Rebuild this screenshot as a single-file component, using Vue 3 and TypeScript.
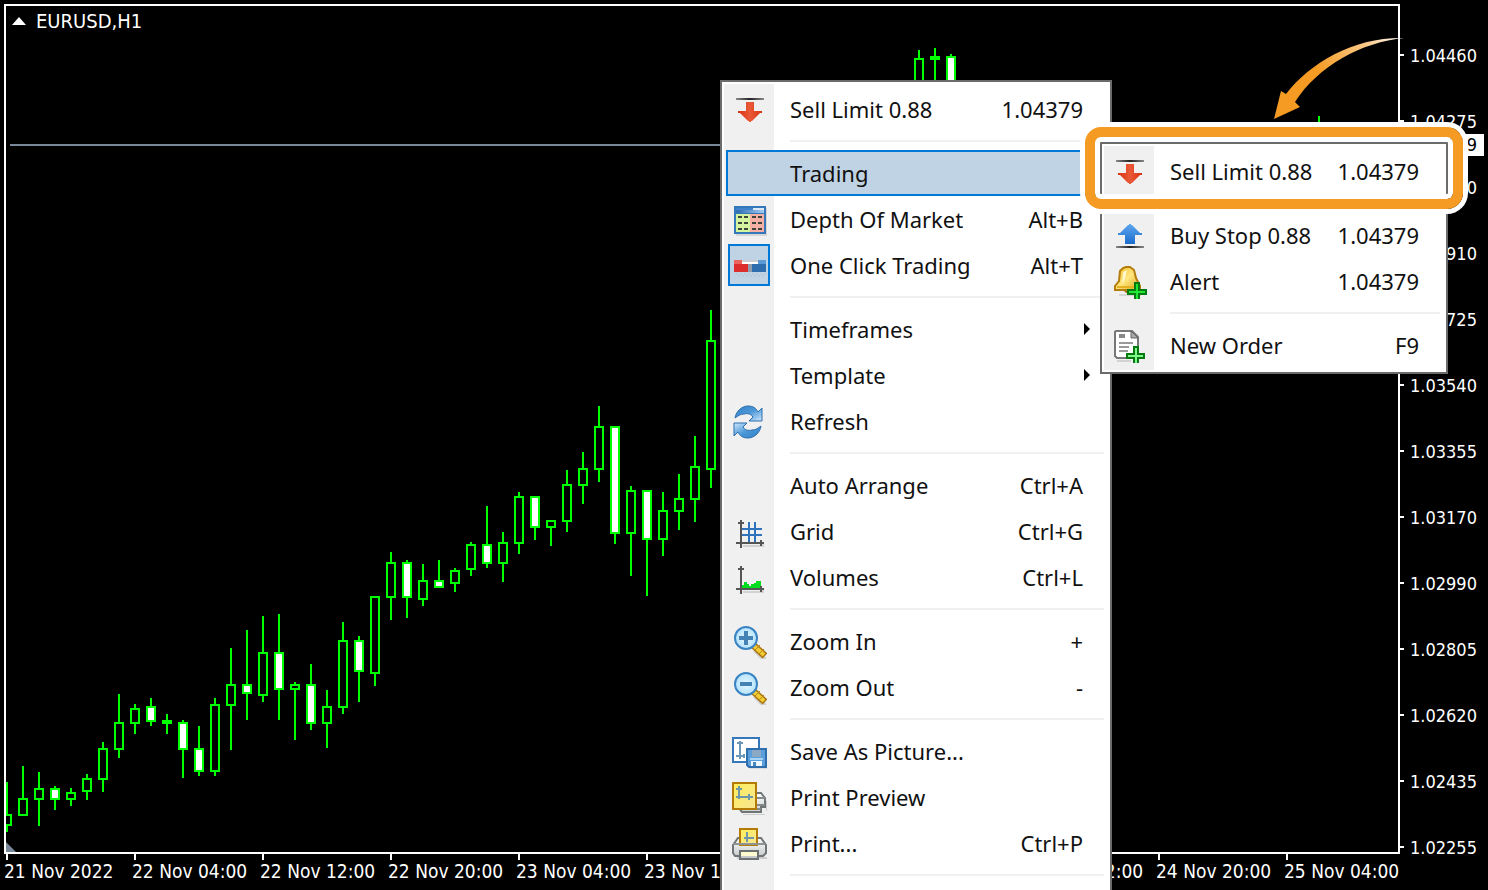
<script setup lang="ts">
interface Candle {
  slot: number
  high: number
  top: number
  bottom: number
  low: number
  bear: boolean
}

interface MenuEntry {
  id: string
  label?: string
  hint?: string
  icon?: string
  sub?: boolean
  active?: boolean
  checked?: boolean
}

const rows: [number, number, number, number, number, boolean][] = [
  [0, 782, 814, 826, 832, false],
  [1, 766, 798, 816, 816, false],
  [2, 772, 788, 800, 826, false],
  [3, 786, 788, 800, 810, true],
  [4, 788, 792, 800, 806, false],
  [5, 774, 778, 792, 800, false],
  [6, 742, 748, 780, 792, false],
  [7, 694, 722, 750, 758, false],
  [8, 704, 708, 724, 734, false],
  [9, 698, 706, 722, 726, true],
  [10, 714, 720, 724, 734, false],
  [11, 720, 722, 750, 778, true],
  [12, 726, 748, 772, 776, true],
  [13, 698, 704, 772, 776, false],
  [14, 648, 684, 706, 750, false],
  [15, 630, 684, 694, 720, true],
  [16, 616, 652, 696, 702, false],
  [17, 614, 652, 690, 720, true],
  [18, 682, 684, 690, 740, false],
  [19, 664, 684, 724, 730, true],
  [20, 690, 706, 724, 748, false],
  [21, 622, 640, 708, 714, false],
  [22, 636, 640, 672, 702, true],
  [23, 596, 596, 674, 686, false],
  [24, 552, 562, 598, 620, false],
  [25, 560, 562, 598, 618, true],
  [26, 564, 580, 600, 606, false],
  [27, 560, 580, 588, 588, true],
  [28, 568, 570, 584, 592, false],
  [29, 542, 544, 570, 576, false],
  [30, 506, 544, 564, 568, true],
  [31, 532, 542, 564, 582, false],
  [32, 492, 496, 544, 554, false],
  [33, 496, 496, 528, 540, true],
  [34, 520, 520, 528, 546, false],
  [35, 470, 484, 522, 532, false],
  [36, 452, 468, 486, 504, false],
  [37, 406, 426, 470, 482, false],
  [38, 426, 426, 534, 544, true],
  [39, 486, 490, 534, 576, false],
  [40, 490, 490, 540, 596, true],
  [41, 492, 510, 540, 556, false],
  [42, 474, 498, 512, 530, false],
  [43, 436, 466, 500, 522, false],
  [44, 310, 340, 470, 488, false],
  [57, 50, 58, 180, 200, false],
  [58, 48, 56, 60, 140, false],
  [59, 54, 56, 180, 200, true],
  [82, 116, 150, 190, 200, false],
]

const candles: Candle[] = rows.map(([slot, high, top, bottom, low, bear]) => ({
  slot, high, top, bottom, low, bear,
}))

const prices = [
  '1.04460', '1.04275', '1.04090', '1.03910', '1.03725', '1.03540', '1.03355',
  '1.03170', '1.02990', '1.02805', '1.02620', '1.02435', '1.02255',
]

const times = [
  '21 Nov 2022', '22 Nov 04:00', '22 Nov 12:00', '22 Nov 20:00', '23 Nov 04:00', '23 Nov 12:00',
  '23 Nov 20:00', '24 Nov 04:00', '24 Nov 12:00', '24 Nov 20:00', '25 Nov 04:00',
]

const mainMenu: MenuEntry[] = [
  { id: 'sell', label: 'Sell Limit 0.88', hint: '1.04379', icon: 'sell' },
  { id: 's1' },
  { id: 'trading', label: 'Trading', active: true },
  { id: 'depth', label: 'Depth Of Market', hint: 'Alt+B', icon: 'depth' },
  { id: 'oneclick', label: 'One Click Trading', hint: 'Alt+T', icon: 'oneclick', checked: true },
  { id: 's2' },
  { id: 'timeframes', label: 'Timeframes', sub: true },
  { id: 'template', label: 'Template', sub: true },
  { id: 'refresh', label: 'Refresh', icon: 'refresh' },
  { id: 's3' },
  { id: 'arrange', label: 'Auto Arrange', hint: 'Ctrl+A' },
  { id: 'grid', label: 'Grid', hint: 'Ctrl+G', icon: 'grid' },
  { id: 'volumes', label: 'Volumes', hint: 'Ctrl+L', icon: 'volumes' },
  { id: 's4' },
  { id: 'zoomin', label: 'Zoom In', hint: '+', icon: 'zoomin' },
  { id: 'zoomout', label: 'Zoom Out', hint: '-', icon: 'zoomout' },
  { id: 's5' },
  { id: 'save', label: 'Save As Picture...', icon: 'save' },
  { id: 'preview', label: 'Print Preview', icon: 'preview' },
  { id: 'print', label: 'Print...', hint: 'Ctrl+P', icon: 'print' },
  { id: 's6' },
]

const subMenu: MenuEntry[] = [
  { id: 'sub-sell', label: 'Sell Limit 0.88', hint: '1.04379', icon: 'sell' },
  { id: 't1' },
  { id: 'sub-buy', label: 'Buy Stop 0.88', hint: '1.04379', icon: 'buy' },
  { id: 'sub-alert', label: 'Alert', hint: '1.04379', icon: 'alert' },
  { id: 't2' },
  { id: 'sub-order', label: 'New Order', hint: 'F9', icon: 'order' },
]

const menus = [
  { name: 'main', title: 'Chart menu', entries: mainMenu },
  { name: 'sub', title: 'Trading menu', entries: subMenu },
]
</script>

<template>
  <main class="terminal">
    <!-- shared gradients and icon symbols -->
    <svg class="defs" aria-hidden="true">
      <defs>
        <linearGradient id="g-line" x1="0" x2="1" y1="0" y2="0">
          <stop offset="0" stop-color="#888" /><stop offset=".5" stop-color="#222" /><stop offset="1" stop-color="#888" />
        </linearGradient>
        <linearGradient id="g-red" x1="0" x2="1" y1="0" y2="0">
          <stop offset="0" stop-color="#da3210" /><stop offset=".5" stop-color="#ea5a38" /><stop offset="1" stop-color="#da3210" />
        </linearGradient>
        <linearGradient id="g-blue" x1="0" x2="0" y1="0" y2="1">
          <stop offset="0" stop-color="#5ea6ee" /><stop offset="1" stop-color="#1a6ccc" />
        </linearGradient>
        <linearGradient id="g-head" x1="0" x2="1" y1="0" y2="0">
          <stop offset="0" stop-color="#2d6cb4" /><stop offset="1" stop-color="#a5cdf2" />
        </linearGradient>
        <linearGradient id="g-bell" x1="0" x2="1" y1="0" y2="1">
          <stop offset="0" stop-color="#f6bd20" /><stop offset=".5" stop-color="#ffe680" /><stop offset="1" stop-color="#d9a20e" />
        </linearGradient>
        <linearGradient id="g-page" x1="0" x2="1" y1="0" y2="1">
          <stop offset="0" stop-color="#ffee58" /><stop offset="1" stop-color="#f6e694" />
        </linearGradient>
        <linearGradient id="g-swirl" x1="0" x2="1" y1="0" y2="1">
          <stop offset="0" stop-color="#2f7fc4" /><stop offset=".5" stop-color="#4d98d8" /><stop offset="1" stop-color="#cfe8ff" />
        </linearGradient>
        <linearGradient id="g-metal" x1="0" x2="0" y1="0" y2="1">
          <stop offset="0" stop-color="#fff" /><stop offset="1" stop-color="#c9cccd" />
        </linearGradient>
        <linearGradient id="g-arrow" gradientUnits="userSpaceOnUse" x1="1320" y1="76" x2="1404" y2="38">
          <stop offset="0" stop-color="#f59b23" /><stop offset=".6" stop-color="#fbca8a" /><stop offset="1" stop-color="#fff" />
        </linearGradient>
        <radialGradient id="g-lens">
          <stop offset="0" stop-color="#e6f8ff" /><stop offset="1" stop-color="#b4e2fc" />
        </radialGradient>
      </defs>

      <symbol id="i-sell" viewBox="0 0 36 36">
        <path d="M5 7h28v2H5z" fill="url(#g-line)" />
        <path d="M15 11h8v9h8v2h-2l-8 8h-1v1h-2v-1h-1l-8-8H7v-2h8z" fill="url(#g-red)" />
      </symbol>
      <symbol id="i-buy" viewBox="0 0 36 36">
        <path d="M5 29h28v2H5z" fill="url(#g-line)" />
        <path d="M14 27V18H7v-2h2l8-8h1V7h2v1h1l8 8h2v2h-7v9z" fill="url(#g-blue)" />
      </symbol>
      <symbol id="i-depth" viewBox="0 0 36 36">
        <path d="M5 33h31v2H5zM35 7h2v28h-2z" fill="#d6d6d6" />
        <path d="M3 5h32v28H3z" fill="#3478bb" />
        <path d="M5 7h28v2H5z" fill="#3e83cc" />
        <path d="M6 9h27v3H6z" fill="url(#g-head)" />
        <path d="M22 7h11v2H22z" fill="#dbe9f7" />
        <path d="M5 13h14v18H5z" fill="#d2f49f" />
        <path d="M19 13h14v18H19z" fill="#f5afa5" />
        <path d="M7 16h4m2 0h4m4 0h4m2 0h4M7 22h4m2 0h4m4 0h4m2 0h4M7 28h4m2 0h4m4 0h4m2 0h4" stroke="#3c433c" stroke-width="2" />
      </symbol>
      <symbol id="i-oneclick" viewBox="0 0 36 36">
        <path d="M3 13h14v12H3z" fill="#dc2f2d" />
        <path d="M3 13h10v4H3z" fill="#e9655d" />
        <path d="M21 13h14v12H21z" fill="#2e6eae" />
        <path d="M25 13h10v4H25z" fill="#5b9bd5" />
        <path d="M17 17h4v8h-4z" fill="#8e9cab" />
        <path d="M11 13h16v2H11z" fill="#c9cdd1" />
        <path d="M11 15h16v2H11z" fill="#fff" />
        <path d="M5 27h30M7 29h28" stroke="#afc3d4" stroke-width="1" stroke-dasharray="2 2" />
      </symbol>
      <symbol id="i-refresh" viewBox="0 0 36 36">
        <g fill="url(#g-swirl)" stroke="#2d6fae" stroke-width="1">
          <path d="M4 15C5 8 11 3 17 3c5 0 8 2 10 6l4-4v13H18l4-4c-2-3-5-4-9-3-4 0-6 2-9 4z" />
          <path d="M4 15C5 8 11 3 17 3c5 0 8 2 10 6l4-4v13H18l4-4c-2-3-5-4-9-3-4 0-6 2-9 4z" transform="rotate(180 17 19)" />
        </g>
      </symbol>
      <symbol id="i-grid" viewBox="0 0 36 36">
        <path d="M12 33h20M32 31v3" stroke="#d2d2d2" stroke-width="2" />
        <path d="M18 9v20M24 9v20M11 16h20M11 22h20" stroke="#2f74bb" stroke-width="2" />
        <path d="M10 7v28M5 30h28M7 10h6M30 27v6" stroke="#555" stroke-width="2" />
      </symbol>
      <symbol id="i-volumes" viewBox="0 0 36 36">
        <path d="M12 33h20M32 31v3" stroke="#d2d2d2" stroke-width="2" />
        <path d="M11 29v-3h2v-3h3v2h2v2h2v-2h3v-1h2v-2h5v7z" fill="#00dc1e" />
        <path d="M10 7v28M5 30h28M7 10h6M30 27v6" stroke="#555" stroke-width="2" />
      </symbol>
      <symbol id="i-lens" viewBox="0 0 36 36">
        <path d="M24 27l10 10" stroke="#d2d2d2" stroke-width="5" />
        <path d="M22 22L34 33" stroke="#a9750c" stroke-width="7" />
        <path d="M23 23L33 32" stroke="#f2cb35" stroke-width="4" />
        <path d="M24 27l5-5M28 31l5-5" stroke="#b88a18" stroke-width="1" />
        <circle cx="15" cy="15" r="11" fill="url(#g-lens)" stroke="#3a83c2" stroke-width="2" />
      </symbol>
      <symbol id="i-zoomin" viewBox="0 0 36 36">
        <use href="#i-lens" /><path d="M8 15h14M15 8v14" stroke="#4583b5" stroke-width="4" />
      </symbol>
      <symbol id="i-zoomout" viewBox="0 0 36 36">
        <use href="#i-lens" /><path d="M9 15h12" stroke="#4583b5" stroke-width="4" />
      </symbol>
      <symbol id="i-save" viewBox="0 0 36 36">
        <path d="M2 5h26v24H2z" fill="#fff" stroke="#3478bb" stroke-width="2" />
        <path d="M9 8v18M6 10h6M5 23h9M13 21v4" stroke="#6b97b8" stroke-width="2" />
        <path d="M19 36h17V19" stroke="#ccc" stroke-width="1" fill="none" />
        <path d="M16 16h19v18H18l-2-2z" fill="#5a9fdc" stroke="#2f6ead" stroke-width="2" />
        <path d="M21 17h9v7h-9z" fill="#8ba9c4" /><path d="M19 25h13v2H19z" fill="#a9d4f6" />
        <path d="M20 28h11v5H20z" fill="#eef8ff" /><path d="M22 29h3v4h-3z" fill="#4a88c2" />
      </symbol>
      <symbol id="i-preview" viewBox="0 0 36 36">
        <path d="M12 36h22M36 22v10" stroke="#ccc" stroke-width="2" />
        <path d="M24 14h6l4 5v9h-4v5H11l-3-4z" fill="url(#g-metal)" stroke="#6f7577" stroke-width="2" />
        <path d="M26 19h8M26 26h8M12 30h18" stroke="#858b8d" stroke-width="2" />
        <path d="M2 4h23v26H2z" fill="url(#g-page)" stroke="#b47a06" stroke-width="2" />
        <path d="M8 7v13M5 10h6M5 18h17M18 15v6" stroke="#6f97a8" stroke-width="2" />
      </symbol>
      <symbol id="i-print" viewBox="0 0 36 36">
        <path d="M6 32h30v2H6z" fill="#ccc" />
        <path d="M9 13H7l-5 7v8l2 3h28l3-3v-8l-5-7h-3" fill="url(#g-metal)" stroke="#6f7577" stroke-width="2" />
        <path d="M9 4h17v16H9z" fill="url(#g-page)" stroke="#b47a06" stroke-width="2" />
        <path d="M16 7v10M13 13h10" stroke="#6f97a8" stroke-width="2" />
        <path d="M2 19h32" stroke="#8e9394" stroke-width="2" />
        <path d="M9 26h18v8H9z" fill="#fffbd0" stroke="#697173" stroke-width="2" />
        <path d="M10 31h16v2H10z" fill="#c4c8c9" />
      </symbol>
      <symbol id="i-alert" viewBox="0 0 36 36">
        <path d="M8 31h22v2H8z" fill="#d6d6d6" />
        <path d="M13 28q3 4 6 0z" fill="#9c6b06" />
        <path d="M15 4h4l4 3 2 8 4 8v4H4v-4l4-5 1-10 3-3z" fill="url(#g-bell)" stroke="#b37c0b" stroke-width="2" />
        <path d="M12 9l4-2-2 9-3 5z" fill="#fff8ce" />
        <path d="M6 24h19" stroke="#e6b121" stroke-width="2" />
        <path d="M24 20h4v7h7v4h-7v6h-4v-6h-7v-4h7z" fill="#1de832" stroke="#067a10" stroke-width="2" />
      </symbol>
      <symbol id="i-order" viewBox="0 0 36 36">
        <path d="M6 33h14v2H6z" fill="#d2d2d2" />
        <path d="M5 4h16l6 6v18l-3 3H6l-2-2V5z" fill="#fff" stroke="#777" stroke-width="2" />
        <path d="M20 4v7h7z" fill="#aaa" stroke="#666" stroke-width="1" />
        <path d="M8 7h6v4H8z" fill="#888" />
        <path d="M8 16h14M8 20h10M8 24h9" stroke="#999" stroke-width="2" />
        <path d="M23 20h4v7h6v4h-6v6h-4v-6h-7v-4h7z" fill="#80fa8a" stroke="#067a10" stroke-width="2" />
      </symbol>
    </svg>

    <section class="plot">
      <svg class="candles" role="img" aria-label="EURUSD hourly candles">
        <g transform="translate(-6 -6)">
          <path d="M6 842l10 10H6z" fill="#778899" />
          <path d="M10 145H1398" stroke="#778899" stroke-width="2" />
          <g v-for="c in candles" :key="c.slot">
            <rect class="wick" :x="6 + c.slot * 16" :y="c.high" width="2" :height="c.low - c.high" />
            <rect
              class="body"
              :class="{ bear: c.bear }"
              :x="3 + c.slot * 16"
              :y="c.top + 1"
              width="8"
              :height="c.bottom - c.top - 2"
            />
          </g>
        </g>
      </svg>
      <h1 class="symbol"><span class="collapse"></span>EURUSD,H1</h1>
    </section>

    <aside class="prices">
      <span v-for="p in prices" :key="p" class="price">{{ p }}</span>
      <span class="quote">1.04379</span>
    </aside>

    <footer class="times">
      <span v-for="t in times" :key="t" class="time">{{ t }}</span>
    </footer>

    <nav v-for="m in menus" :key="m.name" class="menu" :class="m.name" :aria-label="m.title">
      <ul class="list">
        <li v-for="e in m.entries" :key="e.id">
          <button v-if="e.label" type="button" class="item" :class="{ active: e.active }">
            <span class="slot" :class="{ checked: e.checked }">
              <svg v-if="e.icon" class="icon" viewBox="0 0 36 36" aria-hidden="true"><use :href="'#i-' + e.icon" /></svg>
            </span>
            <span class="label">{{ e.label }}</span>
            <span v-if="e.hint" class="hint">{{ e.hint }}</span>
            <span v-if="e.sub" class="more"></span>
          </button>
          <hr v-else class="rule">
        </li>
      </ul>
      <span v-if="m.name === 'sub'" class="ring"></span>
    </nav>

    <svg class="pointer" aria-hidden="true">
      <path
        d="M1274 119L1281 91L1286 94C1311 62 1354 37 1404 38C1362 42 1318 66 1295 102L1300 107Z"
        fill="url(#g-arrow)"
      />
    </svg>
  </main>
</template>

<style>
body {
  margin: 0;
  background: #000;
}
</style>

<style scoped>
.terminal {
  position: relative;
  display: grid;
  grid-template-columns: minmax(0, 1fr) 88px;
  grid-template-rows: minmax(0, 1fr) 36px;
  box-sizing: border-box;
  height: 100vh;
  padding: 4px 0 0 4px;
  overflow: hidden;
  background: #000;
  color: #fff;
  font-family: "DejaVu Sans Condensed", "DejaVu Sans", sans-serif;
  font-size: 18px;
}

.defs {
  position: absolute;
  width: 0;
  height: 0;
}

.plot {
  display: grid;
  border: 2px solid #fff;
  overflow: hidden;
}

.candles,
.symbol {
  grid-area: 1 / 1;
}

.candles {
  width: 100%;
  height: 100%;
}

.wick {
  fill: #0f0;
}

.body {
  fill: #000;
  stroke: #0f0;
  stroke-width: 2px;
}

.bear {
  fill: #fff;
}

.symbol {
  display: flex;
  align-items: center;
  align-self: start;
  gap: 10px;
  margin: 4px 6px;
  font-size: 20px;
  font-weight: 400;
  line-height: 22px;
}

.collapse {
  width: 14px;
  height: 8px;
  background: #fff;
  clip-path: polygon(50% 0, 100% 100%, 0 100%);
}

.prices {
  position: relative;
  padding-top: 18px;
}

.price {
  display: flex;
  align-items: center;
  gap: 6px;
  height: 66px;
}

.price::before {
  content: "";
  width: 4px;
  height: 2px;
  background: #fff;
}

.quote {
  position: absolute;
  top: 130px;
  left: 4px;
  right: 4px;
  padding-left: 6px;
  background: #fff;
  color: #000;
  line-height: 22px;
}

.times {
  display: flex;
  grid-column: 1 / -1;
  font-size: 19px;
}

.time {
  flex: 0 0 128px;
  line-height: 22px;
  white-space: nowrap;
}

.time::before {
  content: "";
  display: block;
  width: 2px;
  height: 6px;
  margin-left: 2px;
  background: #fff;
}

.menu {
  position: absolute;
  box-sizing: border-box;
  border: 2px solid #6b6b6b;
  padding: 2px;
  background: #fff;
  color: #111;
}

.main {
  top: 80px;
  left: 720px;
  width: 392px;
  height: 840px;
}

.sub {
  top: 142px;
  left: 1100px;
  width: 348px;
}

.list {
  box-sizing: border-box;
  min-height: 100%;
  margin: 0;
  padding: 2px 0;
  background: linear-gradient(90deg, #f0f0f0 50px, #fff 50px);
  list-style: none;
}

.item {
  display: flex;
  align-items: center;
  box-sizing: border-box;
  width: 100%;
  height: 46px;
  margin: 0;
  border: 0;
  padding: 0 25px 0 0;
  background: none;
  color: inherit;
  font-family: "Noto Sans", "Open Sans", sans-serif;
  font-size: 22px;
  line-height: 30px;
  text-align: left;
  white-space: nowrap;
}

.active {
  background: #bfd3e4;
  box-shadow: inset 4px 0 0 0 #0078d7, inset 0 0 0 2px #0078d7;
  clip-path: inset(0 2px);
}

.slot {
  display: grid;
  place-items: center;
  flex: none;
  box-sizing: border-box;
  width: 42px;
  height: 42px;
  margin: 0 20px 0 4px;
}

.checked {
  border: 2px solid #0078d7;
  background: #bfd3e4;
}

.icon {
  display: block;
  width: 36px;
  height: 36px;
  overflow: visible;
}

.label {
  flex: 1;
}

.more {
  width: 6px;
  height: 12px;
  margin-right: -7px;
  background: #000;
  clip-path: polygon(0 0, 100% 50%, 0 100%);
}

.rule {
  height: 2px;
  margin: 8px 4px 8px 66px;
  border: 0;
  background: #f0f0f0;
}

.ring {
  position: absolute;
  top: -17px;
  left: -17px;
  right: -17px;
  box-sizing: border-box;
  height: 82px;
  border: 10px solid #f59b23;
  border-radius: 16px;
  box-shadow: 0 0 0 5px #fff, inset 0 0 0 5px #fff;
  pointer-events: none;
}

.pointer {
  position: absolute;
  inset: 0;
  width: 100%;
  height: 100%;
  pointer-events: none;
}
</style>
